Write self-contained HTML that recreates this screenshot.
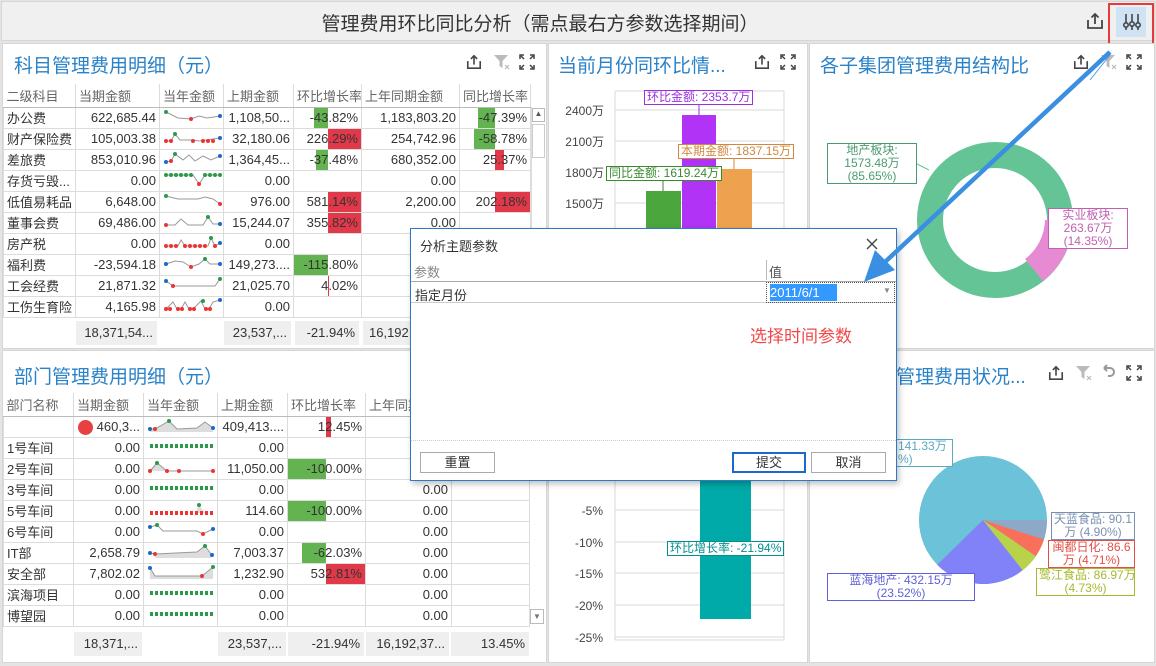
<!DOCTYPE html>
<html><head><meta charset="utf-8">
<style>
*{box-sizing:border-box;margin:0;padding:0}
body{width:1156px;height:666px;position:relative;overflow:hidden;background:#e4e4e4;font-family:"Liberation Sans","Noto Sans CJK SC",sans-serif;color:#333}
.abs{position:absolute}
.panel{position:absolute;background:#fff;border:1px solid #d6d6d6}
.ptitle{position:absolute;font-size:19px;color:#2a82c8;white-space:nowrap}
table{border-collapse:collapse;table-layout:fixed;position:absolute;font-size:13px}
td{border:1px solid #dcdcdc;height:21px;padding:0 3px;white-space:nowrap;overflow:hidden;text-align:right;position:relative}
td.l{text-align:left}
tr.h td{color:#666;text-align:left;border-top:none;border-bottom:1px solid #bbb;height:23px;border-left:1px solid #ccc}
.tot{position:absolute;background:#efefef;font-size:13px;text-align:right;padding-right:4px;line-height:24px;height:24px}
.bar{position:absolute;top:0;bottom:0;z-index:0}
.g{background:#63b350}.r{background:#e2394a}
td span{position:relative;z-index:1}
.lbl{position:absolute;background:#fff;font-size:12px;white-space:nowrap;text-align:center;line-height:13px;padding:0 2px}
.ic{position:absolute}
.btn{position:absolute;border:1px solid #aaa;background:#fff;font-size:13px;text-align:center;line-height:19px}
</style></head><body>
<div class="abs" style="left:1px;top:1px;width:1154px;height:40px;background:#f0f0f0;border:1px solid #d6d6d6"></div>
<div class="abs" style="left:300px;top:9px;width:480px;text-align:center;font-size:19px;color:#333">管理费用环比同比分析（需点最右方参数选择期间）</div>
<svg class="ic" style="left:1086px;top:12px" width="18" height="18" viewBox="0 0 18 18"><path d="M2 8v8h14V8M9 2v10M5.5 5.5L9 2l3.5 3.5" fill="none" stroke="#444" stroke-width="1.8"/></svg>
<div class="abs" style="left:1108px;top:3px;width:46px;height:42px;border:2px solid #e83a3a"></div>
<div class="abs" style="left:1116px;top:7px;width:30px;height:30px;background:#cfe3f5"></div>
<svg class="ic" style="left:1122px;top:12px" width="20" height="20" viewBox="0 0 20 20"><g stroke="#444" stroke-width="1.6" fill="none"><path d="M4 2v16M10 2v16M16 2v16"/><circle cx="4" cy="13" r="2.2" fill="#cfe3f5"/><circle cx="10" cy="12" r="2.2" fill="#cfe3f5"/><circle cx="16" cy="13" r="2.2" fill="#cfe3f5"/></g></svg>

<div class="panel" style="left:2px;top:43px;width:545px;height:306px"></div>
<div class="panel" style="left:548px;top:43px;width:260px;height:306px"></div>
<div class="panel" style="left:809px;top:43px;width:346px;height:306px"></div>
<div class="panel" style="left:2px;top:350px;width:545px;height:313px"></div>
<div class="panel" style="left:548px;top:350px;width:260px;height:313px"></div>
<div class="panel" style="left:809px;top:350px;width:346px;height:313px"></div>

<div class="ptitle" style="left:14px;top:51px">科目管理费用明细（元）</div>
<svg class="ic" style="left:466px;top:54px" width="16" height="16" viewBox="0 0 18 18"><path d="M2 8v8h14V8M9 2v10M5.5 5.5L9 2l3.5 3.5" fill="none" stroke="#444" stroke-width="1.8"/></svg>
<svg class="ic" style="left:493px;top:54px" width="18" height="16" viewBox="0 0 18 16"><path d="M1 1h14l-5.5 6v7l-3-2V7z" fill="#bbb"/><path d="M12 11l4 4M16 11l-4 4" stroke="#bbb" stroke-width="1.2"/></svg>
<svg class="ic" style="left:519px;top:54px" width="16" height="16" viewBox="0 0 16 16"><path d="M1 5V1h4M11 1h4v4M15 11v4h-4M5 15H1v-4M2 2l3 3M14 2l-3 3M14 14l-3-3M2 14l3-3" fill="none" stroke="#444" stroke-width="1.5"/></svg>

<table style="left:3px;top:84px;width:527px">
<colgroup><col style="width:72px"><col style="width:84px"><col style="width:64px"><col style="width:70px"><col style="width:68px"><col style="width:98px"><col style="width:71px"></colgroup>
<tr class="h"><td style="border-left:none">二级科目</td><td>当期金额</td><td>当年金额</td><td>上期金额</td><td>环比增长率</td><td>上年同期金额</td><td>同比增长率</td></tr>
<tr><td class="l">办公费</td><td>622,685.44</td><td><svg width="60" height="14"><polyline points="3,3 15,9 28,10 36,7 44,9 57,7" fill="none" stroke="#999"/><circle cx="3" cy="3" r="2" fill="#2a9a4a"/><circle cx="28" cy="10" r="2" fill="#e33"/><circle cx="57" cy="7" r="2" fill="#1a6ac8"/></svg></td><td>1,108,50...</td><td><div class="bar g" style="left:20px;width:14px"></div><span>-43.82%</span></td><td>1,183,803.20</td><td><div class="bar g" style="left:18px;width:17px"></div><span>-47.39%</span></td></tr>
<tr><td class="l">财产保险费</td><td>105,003.38</td><td><svg width="60" height="14"><polyline points="3,11 8,11 12,4 17,10 30,10 36,11 57,8" fill="none" stroke="#999"/><circle cx="3" cy="11" r="2" fill="#e33"/><circle cx="8" cy="11" r="2" fill="#e33"/><circle cx="12" cy="4" r="2" fill="#2a9a4a"/><circle cx="30" cy="11" r="2" fill="#e33"/><circle cx="40" cy="11" r="2" fill="#e33"/><circle cx="45" cy="11" r="2" fill="#e33"/><circle cx="50" cy="11" r="2" fill="#e33"/><circle cx="57" cy="8" r="2" fill="#1a6ac8"/></svg></td><td>32,180.06</td><td><div class="bar r" style="left:34px;width:34px"></div><span>226.29%</span></td><td>254,742.96</td><td><div class="bar g" style="left:14px;width:21px"></div><span>-58.78%</span></td></tr>
<tr><td class="l">差旅费</td><td>853,010.96</td><td><svg width="60" height="14"><polyline points="3,11 8,10 12,3 20,9 26,4 32,10 40,5 48,9 57,5" fill="none" stroke="#999"/><circle cx="3" cy="11" r="2" fill="#1a6ac8"/><circle cx="8" cy="10" r="2" fill="#e33"/><circle cx="12" cy="3" r="2" fill="#2a9a4a"/><circle cx="57" cy="5" r="2" fill="#1a6ac8"/></svg></td><td>1,364,45...</td><td><div class="bar g" style="left:22px;width:12px"></div><span>-37.48%</span></td><td>680,352.00</td><td><div class="bar r" style="left:35px;width:9px"></div><span>25.37%</span></td></tr>
<tr><td class="l">存货亏毁...</td><td>0.00</td><td><svg width="60" height="14"><polyline points="3,3 30,3 36,12 42,3 57,3" fill="none" stroke="#999"/><g fill="#2a9a4a"><circle cx="3" cy="3" r="2"/><circle cx="8" cy="3" r="2"/><circle cx="13" cy="3" r="2"/><circle cx="18" cy="3" r="2"/><circle cx="23" cy="3" r="2"/><circle cx="28" cy="3" r="2"/><circle cx="42" cy="3" r="2"/><circle cx="47" cy="3" r="2"/><circle cx="52" cy="3" r="2"/><circle cx="57" cy="3" r="2"/></g><circle cx="36" cy="12" r="2" fill="#e33"/></svg></td><td>0.00</td><td></td><td>0.00</td><td></td></tr>
<tr><td class="l">低值易耗品</td><td>6,648.00</td><td><svg width="60" height="14"><polyline points="3,3 15,6 35,6 42,4 50,6 57,11" fill="none" stroke="#999"/><circle cx="3" cy="3" r="2" fill="#2a9a4a"/><circle cx="57" cy="11" r="2" fill="#e33"/></svg></td><td>976.00</td><td><div class="bar r" style="left:34px;width:34px"></div><span>581.14%</span></td><td>2,200.00</td><td><div class="bar r" style="left:35px;width:35px"></div><span>202.18%</span></td></tr>
<tr><td class="l">董事会费</td><td>69,486.00</td><td><svg width="60" height="14"><polyline points="3,11 12,11 18,5 25,11 40,11 45,3 50,10 57,10" fill="none" stroke="#999"/><circle cx="3" cy="11" r="2" fill="#e33"/><circle cx="45" cy="3" r="2" fill="#2a9a4a"/><circle cx="57" cy="10" r="2" fill="#1a6ac8"/></svg></td><td>15,244.07</td><td><div class="bar r" style="left:34px;width:34px"></div><span>355.82%</span></td><td>0.00</td><td></td></tr>
<tr><td class="l">房产税</td><td>0.00</td><td><svg width="60" height="14"><polyline points="3,11 15,11 18,5 22,11 45,11 48,3 52,11 57,8" fill="none" stroke="#999"/><g fill="#e33"><circle cx="3" cy="11" r="2"/><circle cx="8" cy="11" r="2"/><circle cx="13" cy="11" r="2"/><circle cx="22" cy="11" r="2"/><circle cx="27" cy="11" r="2"/><circle cx="32" cy="11" r="2"/><circle cx="37" cy="11" r="2"/><circle cx="42" cy="11" r="2"/><circle cx="52" cy="11" r="2"/></g><circle cx="48" cy="3" r="2" fill="#2a9a4a"/><circle cx="57" cy="8" r="2" fill="#1a6ac8"/></svg></td><td>0.00</td><td></td><td></td><td></td></tr>
<tr><td class="l">福利费</td><td>-23,594.18</td><td><svg width="60" height="14"><polyline points="3,8 12,5 20,6 28,11 36,8 42,3 47,8 57,8" fill="none" stroke="#999"/><circle cx="3" cy="8" r="2" fill="#1a6ac8"/><circle cx="28" cy="11" r="2" fill="#e33"/><circle cx="42" cy="3" r="2" fill="#2a9a4a"/><circle cx="57" cy="8" r="2" fill="#1a6ac8"/></svg></td><td>149,273....</td><td><div class="bar g" style="left:0;width:34px"></div><span>-115.80%</span></td><td>153</td><td></td></tr>
<tr><td class="l">工会经费</td><td>21,871.32</td><td><svg width="60" height="14"><polyline points="3,4 10,9 52,9 57,2" fill="none" stroke="#999"/><circle cx="3" cy="4" r="2" fill="#1a6ac8"/><circle cx="10" cy="9" r="2" fill="#e33"/><circle cx="57" cy="2" r="2" fill="#2a9a4a"/></svg></td><td>21,025.70</td><td><div class="bar r" style="left:34px;width:1px"></div><span>4.02%</span></td><td>12</td><td></td></tr>
<tr><td class="l">工伤生育险</td><td>4,165.98</td><td><svg width="60" height="14"><polyline points="3,11 10,4 14,11 18,11 22,4 26,11 30,11 38,3 42,11 46,11 50,4 57,2" fill="none" stroke="#999"/><g fill="#e33"><circle cx="3" cy="11" r="2"/><circle cx="7" cy="11" r="2"/><circle cx="15" cy="11" r="2"/><circle cx="19" cy="11" r="2"/><circle cx="27" cy="11" r="2"/><circle cx="31" cy="11" r="2"/><circle cx="43" cy="11" r="2"/><circle cx="47" cy="11" r="2"/></g><circle cx="40" cy="3" r="2" fill="#2a9a4a"/><circle cx="57" cy="2" r="2" fill="#1a6ac8"/></svg></td><td>0.00</td><td></td><td>2</td><td></td></tr>
</table>
<div class="abs" style="left:531px;top:107px;width:14px;height:210px;border-left:1px solid #ddd;background:#fff"></div>
<div class="abs" style="left:532px;top:108px;width:13px;height:14px;border:1px solid #bbb;font-size:8px;text-align:center;color:#555">▲</div>
<div class="abs" style="left:532px;top:124px;width:13px;height:34px;border:1px solid #ccc"></div>
<div class="tot" style="left:76px;top:321px;width:81px">18,371,54...</div>
<div class="tot" style="left:224px;top:321px;width:67px">23,537,...</div>
<div class="tot" style="left:295px;top:321px;width:64px">-21.94%</div>
<div class="tot" style="left:363px;top:321px;width:90px;text-align:left;padding-left:6px">16,192</div>

<div class="ptitle" style="left:14px;top:362px">部门管理费用明细（元）</div>
<table style="left:3px;top:393px;width:526px">
<colgroup><col style="width:70px"><col style="width:70px"><col style="width:74px"><col style="width:70px"><col style="width:78px"><col style="width:86px"><col style="width:78px"></colgroup>
<tr class="h"><td style="border-left:none">部门名称</td><td>当期金额</td><td>当年金额</td><td>上期金额</td><td>环比增长率</td><td>上年同期金额</td><td>同比增长率</td></tr>
<tr><td></td><td><div class="abs" style="left:4px;top:3px;width:15px;height:15px;border-radius:50%;background:#e84040"></div>460,3...</td><td><svg width="70" height="14"><polygon points="3,11 8,11 22,3 30,11 50,10 58,4 66,10 66,14 3,14" fill="#ddd"/><polyline points="3,11 8,11 22,3 30,11 50,10 58,4 66,10" fill="none" stroke="#999"/><circle cx="3" cy="11" r="2" fill="#1a6ac8"/><circle cx="8" cy="11" r="2" fill="#e33"/><circle cx="22" cy="3" r="2" fill="#2a9a4a"/><circle cx="66" cy="10" r="2" fill="#1a6ac8"/></svg></td><td>409,413....</td><td><div class="bar r" style="left:38px;width:5px"></div><span>12.45%</span></td><td>703,9</td><td></td></tr>
<tr><td class="l">1号车间</td><td>0.00</td><td><svg width="70" height="14"><line x1="3" y1="7" x2="67" y2="7" stroke="#2a9a4a" stroke-width="4" stroke-dasharray="3 2"/></svg></td><td>0.00</td><td></td><td></td><td></td></tr>
<tr><td class="l">2号车间</td><td>0.00</td><td><svg width="70" height="14"><polygon points="3,11 10,3 20,11 66,11" fill="#ddd"/><polyline points="3,11 10,3 20,11 66,11" fill="none" stroke="#999"/><circle cx="3" cy="11" r="2" fill="#e33"/><circle cx="10" cy="3" r="2" fill="#2a9a4a"/><circle cx="20" cy="11" r="2" fill="#e33"/><circle cx="32" cy="11" r="2" fill="#e33"/><circle cx="66" cy="11" r="2" fill="#e33"/></svg></td><td>11,050.00</td><td><div class="bar g" style="left:0;width:38px"></div><span>-100.00%</span></td><td></td><td></td></tr>
<tr><td class="l">3号车间</td><td>0.00</td><td><svg width="70" height="14"><line x1="3" y1="7" x2="67" y2="7" stroke="#2a9a4a" stroke-width="4" stroke-dasharray="3 2"/></svg></td><td>0.00</td><td></td><td>0.00</td><td></td></tr>
<tr><td class="l">5号车间</td><td>0.00</td><td><svg width="70" height="14"><polygon points="48,11 52,3 58,11" fill="#ddd"/><line x1="3" y1="11" x2="66" y2="11" stroke="#e33" stroke-width="4" stroke-dasharray="3 2"/><circle cx="52" cy="3" r="2" fill="#2a9a4a"/></svg></td><td>114.60</td><td><div class="bar g" style="left:0;width:38px"></div><span>-100.00%</span></td><td>0.00</td><td></td></tr>
<tr><td class="l">6号车间</td><td>0.00</td><td><svg width="70" height="14"><polyline points="3,4 10,2 16,8 50,8 56,11 62,8 66,6" fill="none" stroke="#999"/><circle cx="3" cy="4" r="2" fill="#1a6ac8"/><circle cx="10" cy="2" r="2" fill="#2a9a4a"/><circle cx="56" cy="11" r="2" fill="#e33"/><circle cx="66" cy="6" r="2" fill="#1a6ac8"/></svg></td><td>0.00</td><td></td><td>0.00</td><td></td></tr>
<tr><td class="l">IT部</td><td>2,658.79</td><td><svg width="70" height="14"><polygon points="8,10 50,8 58,2 64,10 64,14 8,14" fill="#ddd"/><polyline points="3,9 8,10 50,8 58,2 64,10" fill="none" stroke="#999"/><circle cx="3" cy="9" r="2" fill="#1a6ac8"/><circle cx="8" cy="10" r="2" fill="#e33"/><circle cx="58" cy="2" r="2" fill="#2a9a4a"/><circle cx="65" cy="11" r="2" fill="#1a6ac8"/></svg></td><td>7,003.37</td><td><div class="bar g" style="left:14px;width:24px"></div><span>-62.03%</span></td><td>0.00</td><td></td></tr>
<tr><td class="l">安全部</td><td>7,802.02</td><td><svg width="70" height="14"><polygon points="3,3 8,11 55,11 66,2 66,14 3,14" fill="#ddd"/><polyline points="3,3 8,11 55,11 66,2" fill="none" stroke="#999"/><circle cx="3" cy="3" r="2" fill="#1a6ac8"/><circle cx="55" cy="11" r="2" fill="#e33"/><circle cx="66" cy="2" r="2" fill="#2a9a4a"/></svg></td><td>1,232.90</td><td><div class="bar r" style="left:38px;width:40px"></div><span>532.81%</span></td><td>0.00</td><td></td></tr>
<tr><td class="l">滨海项目</td><td>0.00</td><td><svg width="70" height="14"><line x1="3" y1="7" x2="67" y2="7" stroke="#2a9a4a" stroke-width="4" stroke-dasharray="3 2"/></svg></td><td>0.00</td><td></td><td>0.00</td><td></td></tr>
<tr><td class="l">博望园</td><td>0.00</td><td><svg width="70" height="14"><line x1="3" y1="7" x2="67" y2="7" stroke="#2a9a4a" stroke-width="4" stroke-dasharray="3 2"/></svg></td><td>0.00</td><td></td><td>0.00</td><td></td></tr>
</table>
<div class="abs" style="left:530px;top:609px;width:14px;height:15px;border:1px solid #bbb;font-size:8px;text-align:center;color:#777;line-height:13px">▼</div>
<div class="tot" style="left:74px;top:632px;width:68px">18,371,...</div>
<div class="tot" style="left:218px;top:632px;width:68px">23,537,...</div>
<div class="tot" style="left:288px;top:632px;width:76px">-21.94%</div>
<div class="tot" style="left:366px;top:632px;width:83px">16,192,37...</div>
<div class="tot" style="left:451px;top:632px;width:78px">13.45%</div>

<div class="ptitle" style="left:558px;top:51px">当前月份同环比情...</div>
<svg class="ic" style="left:754px;top:54px" width="16" height="16" viewBox="0 0 18 18"><path d="M2 8v8h14V8M9 2v10M5.5 5.5L9 2l3.5 3.5" fill="none" stroke="#444" stroke-width="1.8"/></svg>
<svg class="ic" style="left:780px;top:54px" width="16" height="16" viewBox="0 0 16 16"><path d="M1 5V1h4M11 1h4v4M15 11v4h-4M5 15H1v-4M2 2l3 3M14 2l-3 3M14 14l-3-3M2 14l3-3" fill="none" stroke="#444" stroke-width="1.5"/></svg>
<svg class="abs" style="left:548px;top:80px" width="260" height="160">
<g stroke="#d8d8d8"><line x1="67" y1="11" x2="236" y2="11"/><line x1="67" y1="30" x2="236" y2="30"/><line x1="67" y1="61" x2="236" y2="61"/><line x1="67" y1="92" x2="236" y2="92"/><line x1="67" y1="123" x2="236" y2="123"/><line x1="67" y1="11" x2="67" y2="160"/><line x1="236" y1="11" x2="236" y2="160"/></g>
<g font-size="12" fill="#444" text-anchor="end" font-family="Liberation Sans,Noto Sans CJK SC,sans-serif"><text x="56" y="35">2400万</text><text x="56" y="66">2100万</text><text x="56" y="97">1800万</text><text x="56" y="128">1500万</text></g>
<rect x="98" y="111" width="35" height="49" fill="#4ca63e"/><rect x="134" y="35" width="34" height="125" fill="#b033f6"/><rect x="169" y="89" width="35" height="71" fill="#eea250"/>
<g stroke-width="1"><line x1="151" y1="25" x2="151" y2="35" stroke="#9a30e0"/><line x1="186" y1="79" x2="186" y2="89" stroke="#d08840"/><line x1="115" y1="101" x2="115" y2="111" stroke="#3a8a30"/></g>
</svg>
<div class="lbl" style="left:644px;top:90px;border:1px solid #9a30e0;color:#9a30e0">环比金额: 2353.7万</div>
<div class="lbl" style="left:678px;top:144px;border:1px solid #d08840;color:#d08840">本期金额: 1837.15万</div>
<div class="lbl" style="left:606px;top:166px;border:1px solid #3a8a30;color:#3a8a30">同比金额: 1619.24万</div>

<svg class="abs" style="left:548px;top:470px" width="260" height="180">
<g stroke="#d8d8d8"><line x1="67" y1="40" x2="236" y2="40"/><line x1="67" y1="72" x2="236" y2="72"/><line x1="67" y1="103" x2="236" y2="103"/><line x1="67" y1="135" x2="236" y2="135"/><line x1="67" y1="167" x2="236" y2="167"/><line x1="67" y1="0" x2="67" y2="170"/><line x1="236" y1="0" x2="236" y2="170"/><line x1="67" y1="170" x2="236" y2="170"/></g>
<g font-size="12" fill="#444" text-anchor="end" font-family="Liberation Sans,sans-serif"><text x="55" y="45">-5%</text><text x="55" y="77">-10%</text><text x="55" y="108">-15%</text><text x="55" y="140">-20%</text><text x="55" y="172">-25%</text></g>
<rect x="152" y="0" width="51" height="149" fill="#00aaa8"/>
</svg>
<div class="lbl" style="left:667px;top:541px;border:1px solid #00908e;color:#00908e">环比增长率: -21.94%</div>

<div class="ptitle" style="left:820px;top:51px">各子集团管理费用结构比</div>
<svg class="ic" style="left:1073px;top:54px" width="16" height="16" viewBox="0 0 18 18"><path d="M2 8v8h14V8M9 2v10M5.5 5.5L9 2l3.5 3.5" fill="none" stroke="#444" stroke-width="1.8"/></svg>
<svg class="ic" style="left:1100px;top:54px" width="18" height="16" viewBox="0 0 18 16"><path d="M1 1h14l-5.5 6v7l-3-2V7z" fill="#bbb"/><path d="M12 11l4 4M16 11l-4 4" stroke="#bbb" stroke-width="1.2"/></svg>
<svg class="ic" style="left:1126px;top:54px" width="16" height="16" viewBox="0 0 16 16"><path d="M1 5V1h4M11 1h4v4M15 11v4h-4M5 15H1v-4M2 2l3 3M14 2l-3 3M14 14l-3-3M2 14l3-3" fill="none" stroke="#444" stroke-width="1.5"/></svg>
<svg class="abs" style="left:809px;top:100px" width="346" height="240">
<circle cx="186" cy="120" r="65" fill="none" stroke="#65c495" stroke-width="26"/>
<path d="M264 120 A78 78 0 0 1 234 181 L216 159 A50 50 0 0 0 236 120 Z" fill="#e68ad4"/>
<line x1="108" y1="64" x2="120" y2="70" stroke="#65c495"/><line x1="258" y1="140" x2="240" y2="135" stroke="#c060b0"/>
</svg>
<div class="lbl" style="left:827px;top:143px;width:90px;border:1px solid #4a9a70;color:#4a9a70">地产板块:<br>1573.48万<br>(85.65%)</div>
<div class="lbl" style="left:1048px;top:208px;width:80px;border:1px solid #c060b0;color:#c060b0">实业板块:<br>263.67万<br>(14.35%)</div>

<div class="ptitle" style="left:896px;top:362px">管理费用状况...</div>
<svg class="ic" style="left:1048px;top:365px" width="16" height="16" viewBox="0 0 18 18"><path d="M2 8v8h14V8M9 2v10M5.5 5.5L9 2l3.5 3.5" fill="none" stroke="#444" stroke-width="1.8"/></svg>
<svg class="ic" style="left:1075px;top:365px" width="18" height="16" viewBox="0 0 18 16"><path d="M1 1h14l-5.5 6v7l-3-2V7z" fill="#bbb"/><path d="M12 11l4 4M16 11l-4 4" stroke="#bbb" stroke-width="1.2"/></svg>
<svg class="ic" style="left:1100px;top:364px" width="16" height="18" viewBox="0 0 16 18"><path d="M4 4h6a4 4 0 0 1 0 8H8M4 4l3-3M4 4l3 3" fill="none" stroke="#999" stroke-width="2"/></svg>
<svg class="ic" style="left:1126px;top:365px" width="16" height="16" viewBox="0 0 16 16"><path d="M1 5V1h4M11 1h4v4M15 11v4h-4M5 15H1v-4M2 2l3 3M14 2l-3 3M14 14l-3-3M2 14l3-3" fill="none" stroke="#444" stroke-width="1.5"/></svg>
<svg class="abs" style="left:809px;top:400px" width="346" height="260">
<g transform="translate(174,120)">
<circle r="64" fill="#6cc2d8"/>
<path d="M0 0L64 0A64 64 0 0 1 61.0 19.4Z" fill="#8ea8c8"/>
<path d="M0 0L61.0 19.4A64 64 0 0 1 52.8 36.2Z" fill="#f8705c"/>
<path d="M0 0L52.8 36.2A64 64 0 0 1 39.6 50.3Z" fill="#b8d24a"/>
<path d="M0 0L39.6 50.3A64 64 0 0 1 -45.8 44.7Z" fill="#8282f8"/>
</g>
</svg>
<div class="lbl" style="left:895px;top:439px;width:58px;border:1px solid #5aaac0;color:#5aaac0;text-align:left">141.33万<br>%)</div>
<div class="lbl" style="left:1051px;top:512px;width:84px;border:1px solid #7a90b0;color:#7a90b0">天蓝食品: 90.1<br>万 (4.90%)</div>
<div class="lbl" style="left:1048px;top:540px;width:87px;border:1px solid #e05048;color:#e05048">闽都日化: 86.6<br>万 (4.71%)</div>
<div class="lbl" style="left:1036px;top:568px;width:99px;border:1px solid #a8b830;color:#a8b830">鹭江食品: 86.97万<br>(4.73%)</div>
<div class="lbl" style="left:827px;top:573px;width:148px;border:1px solid #6060d8;color:#6060d8">蓝海地产: 432.15万<br>(23.52%)</div>

<div class="abs" style="left:410px;top:228px;width:487px;height:253px;background:#fff;border:1px solid #2a7ac8;box-shadow:2px 3px 6px rgba(0,0,0,.25)"></div>
<div class="abs" style="left:420px;top:236px;font-size:13px;color:#333">分析主题参数</div>
<svg class="abs" style="left:866px;top:238px" width="12" height="12"><path d="M1 1l10 10M11 1L1 11" stroke="#444" stroke-width="1.4"/></svg>
<div class="abs" style="left:411px;top:260px;width:485px;height:22px;border-bottom:1px solid #aaa"></div>
<div class="abs" style="left:414px;top:262px;font-size:13px;color:#888">参数</div>
<div class="abs" style="left:766px;top:260px;width:1px;height:20px;background:#bbb"></div>
<div class="abs" style="left:769px;top:262px;font-size:13px;color:#555">值</div>
<div class="abs" style="left:411px;top:282px;width:485px;height:21px;border-bottom:1px solid #ccc"></div>
<div class="abs" style="left:415px;top:285px;font-size:13px;color:#333">指定月份</div>
<div class="abs" style="left:766px;top:282px;width:129px;height:21px;border:1px dotted #555"></div>
<div class="abs" style="left:770px;top:284px;width:67px;height:17px;background:#3399ff;color:#fff;font-size:13px;line-height:17px">2011/6/1</div>
<div class="abs" style="left:883px;top:286px;font-size:8px;color:#888">▼</div>
<div class="abs" style="left:750px;top:322px;font-size:17px;color:#f04848">选择时间参数</div>
<div class="abs" style="left:411px;top:440px;width:485px;border-top:1px dotted #ccc"></div>
<div class="btn" style="left:420px;top:452px;width:75px;height:21px">重置</div>
<div class="btn" style="left:732px;top:452px;width:74px;height:21px;border:2px solid #1a6ac8;line-height:17px">提交</div>
<div class="btn" style="left:811px;top:452px;width:75px;height:21px">取消</div>

<svg class="abs" style="left:0;top:0;pointer-events:none" width="1156" height="666">
<line x1="1110" y1="52" x2="885" y2="262" stroke="#3a8fe0" stroke-width="4.5"/>
<line x1="1090" y1="80" x2="1110" y2="55" stroke="#4a9ae8" stroke-width="1"/>
<polygon points="864,282 875,250 895,270" fill="#3a8fe0"/>
</svg>
</body></html>
